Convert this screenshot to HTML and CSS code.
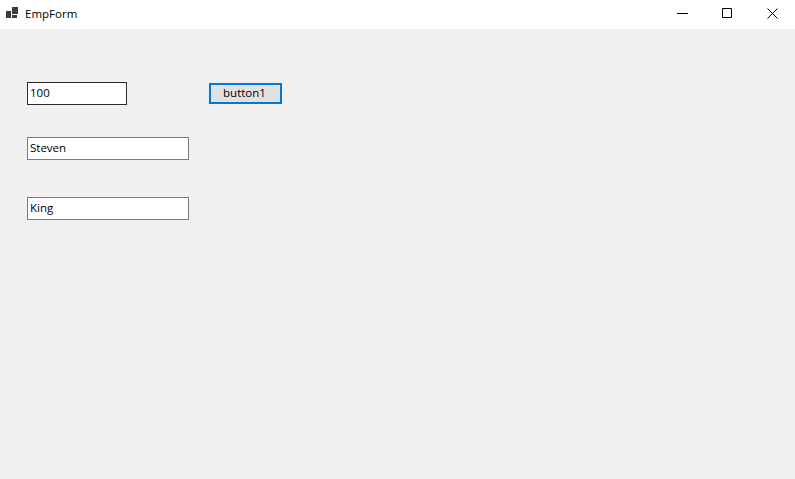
FILE: index.html
```html
<!DOCTYPE html>
<html lang="en">
<head>
    <meta charset="UTF-8">
    <title>EmpForm</title>
    <link rel="stylesheet" href="styles.css">
</head>
<body>
    <div class="window">
        <div class="titlebar">
            <svg class="app-icon" width="12" height="11" viewBox="0 0 12 11">
                <rect x="0" y="4" width="5" height="7" fill="#3c3c3c"/>
                <rect x="6" y="0" width="6" height="7" fill="#3c3c3c"/>
                <rect x="6" y="8" width="5" height="3" fill="#3c3c3c"/>
            </svg>
            <div class="title">EmpForm</div>
            <div class="controls">
                <div class="control">
                    <svg width="11" height="11" viewBox="0 0 11 11"><path d="M0 5.5H11" stroke="#000" fill="none"/></svg>
                </div>
                <div class="control">
                    <svg width="11" height="11" viewBox="0 0 11 11"><path d="M0.5 0.5H9.5V9.5H0.5Z" stroke="#000" fill="none"/></svg>
                </div>
                <div class="control">
                    <svg width="11" height="11" viewBox="0 0 11 11"><path d="M0.5 0.5L10.5 10.5M10.5 0.5L0.5 10.5" stroke="#000" stroke-width="1" fill="none"/></svg>
                </div>
            </div>
        </div>
        <div class="form">
            <div class="top-row">
                <input class="field field-id" type="text" value="100">
                <button class="btn" type="button">button1</button>
            </div>
            <input class="field field-first" type="text" value="Steven">
            <input class="field field-last" type="text" value="King">
        </div>
    </div>
</body>
</html>
```
FILE: styles.css
```css
html, body {
    margin: 0;
    padding: 0;
    height: 100%;
    overflow: hidden;
}
body {
    font-family: "Open Sans", "Noto Sans", sans-serif;
    font-size: 11.5px;
    color: #000;
}
.window {
    display: flex;
    flex-direction: column;
    height: 100%;
    background-color: #f0f0f0;
}
.titlebar {
    display: flex;
    align-items: center;
    height: 29px;
    background-color: #fff;
    padding-left: 6px;
}
.app-icon {
    margin-top: -4px;
}
.title {
    margin-left: 7px;
    margin-top: -2px;
}
.controls {
    display: flex;
    margin-left: auto;
    margin-top: -3px;
}
.control {
    display: flex;
    align-items: center;
    justify-content: center;
    width: 45px;
    height: 26px;
}
.form {
    display: flex;
    flex-direction: column;
    align-items: flex-start;
    padding: 53px 0 0 27px;
}
.top-row {
    display: flex;
    align-items: center;
}
.field {
    box-sizing: border-box;
    height: 23px;
    padding: 0 2px 2px;
    border: 1px solid #7a7a7a;
    border-radius: 0;
    background-color: #fff;
    font: inherit;
    color: #000;
    outline: none;
}
.field-id {
    width: 100px;
    border-color: #2b2b2b;
}
.field-first {
    width: 162px;
    margin-top: 32px;
}
.field-last {
    width: 162px;
    margin-top: 37px;
}
.btn {
    box-sizing: border-box;
    width: 73px;
    height: 21px;
    margin-left: 82px;
    padding: 0 2px 2px 0;
    border: 2px solid #0078d7;
    border-radius: 0;
    background-color: #e1e1e1;
    font: inherit;
    color: #000;
}
```
